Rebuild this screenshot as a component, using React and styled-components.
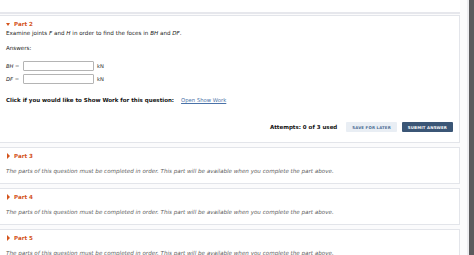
import React from "react";
import styled, { createGlobalStyle } from "styled-components";

const Global = createGlobalStyle`
  html, body { margin: 0; padding: 0; background: #ffffff; }
  body { font-family: "DejaVu Sans", Verdana, sans-serif; color: #333; }
`;

const Frame = styled.div`
  display: flex;
  width: 474px;
  height: 255px;
  overflow: hidden;
`;

const Main = styled.div`
  flex: 1;
  display: flex;
  flex-direction: column;
  gap: 4px;
  padding-right: 7px;
  background: #fbfbfc;
`;

const Edge = styled.div`
  width: 5px;
  border-left: 2px solid #ececef;
  background: #5b5b5d;
  flex-shrink: 0;
`;

const Card = styled.section`
  background: #fff;
  border: 1px solid #e3e5ea;
  border-left: none;
  box-sizing: border-box;
  padding: 4px 6px 0 6px;
  height: ${(p) => p.$h}px;
  flex-shrink: 0;
`;

const TopCard = styled.div`
  height: 12px;
  background: #fff;
  border-bottom: 2px solid #e6e7ec;
  flex-shrink: 0;
  margin-bottom: -3px;
`;

const PartTitle = styled.div`
  display: flex;
  align-items: center;
  gap: 4px;
  color: #d4541c;
  font-size: 5.6px;
  font-weight: bold;
  height: 8px;
`;

const Arrow = styled.span`
  width: 0;
  height: 0;
  ${(p) =>
    p.$open
      ? `border-left: 2.5px solid transparent; border-right: 2.5px solid transparent; border-top: 3px solid #d4541c;`
      : `border-top: 3px solid transparent; border-bottom: 3px solid transparent; border-left: 3px solid #d4541c; margin-left: 1px;`}
`;

const Text = styled.p`
  margin: ${(p) => p.$m || "0"};
  font-size: 5.6px;
  color: #222;
  line-height: 8px;
`;

const Locked = styled.p`
  margin: 7px 0 0 0;
  font-size: 5.6px;
  font-style: italic;
  color: #5e5e5e;
  line-height: 8px;
`;

const AnswerRow = styled.div`
  display: flex;
  align-items: center;
  height: 10px;
  margin-top: ${(p) => p.$mt}px;
  font-size: 5.2px;
`;

const Label = styled.span`
  width: 17px;
  font-style: italic;
  color: #222;
`;

const Input = styled.div`
  width: 69px;
  height: 8px;
  border: 1px solid #b4b4b4;
  border-radius: 1px;
  background: #fff;
`;

const Unit = styled.span`
  margin-left: 3px;
  color: #222;
`;

const WorkRow = styled.div`
  display: flex;
  align-items: center;
  gap: 7px;
  margin-top: 13px;
  font-size: 5.5px;
`;

const Bold = styled.span`
  font-weight: bold;
  color: #111;
`;

const Link = styled.span`
  color: #4a72a8;
  text-decoration: underline;
  font-size: 5.3px;
`;

const Actions = styled.div`
  display: flex;
  justify-content: flex-end;
  align-items: center;
  margin-top: 19px;
  font-size: 5.5px;
`;

const Attempts = styled.span`
  font-weight: bold;
  color: #111;
  margin-right: 9px;
`;

const Btn = styled.div`
  height: 10px;
  display: flex;
  align-items: center;
  padding: 0 ${(p) => (p.$primary ? 6 : 6)}px;
  font-size: 3.9px;
  font-weight: bold;
  letter-spacing: 0.15px;
  border-radius: 1px;
  background: ${(p) => (p.$primary ? "#3b5676" : "#e9eef4")};
  color: ${(p) => (p.$primary ? "#fff" : "#4b6c93")};
  margin-left: ${(p) => (p.$primary ? 5 : 0)}px;
`;

const lockedMsg =
  "The parts of this question must be completed in order. This part will be available when you complete the part above.";

function LockedPart({ n }) {
  return (
    <Card $h={37}>
      <PartTitle>
        <Arrow />
        Part {n}
      </PartTitle>
      <Locked>{lockedMsg}</Locked>
    </Card>
  );
}

export default function App() {
  return (
    <>
      <Global />
      <Frame>
        <Main>
          <TopCard />
          <Card $h={128}>
            <PartTitle>
              <Arrow $open />
              Part 2
            </PartTitle>
            <Text $m="1px 0 0 0">
              Examine joints <i>F</i> and <i>H</i> in order to find the foces in <i>BH</i> and <i>DF</i>.
            </Text>
            <Text $m="7px 0 0 0">Answers:</Text>
            <AnswerRow $mt={9}>
              <Label>BH =</Label>
              <Input />
              <Unit>kN</Unit>
            </AnswerRow>
            <AnswerRow $mt={3}>
              <Label>DF =</Label>
              <Input />
              <Unit>kN</Unit>
            </AnswerRow>
            <WorkRow>
              <Bold>Click if you would like to Show Work for this question:</Bold>
              <Link>Open Show Work</Link>
            </WorkRow>
            <Actions>
              <Attempts>Attempts: 0 of 3 used</Attempts>
              <Btn>SAVE FOR LATER</Btn>
              <Btn $primary>SUBMIT ANSWER</Btn>
            </Actions>
          </Card>
          <LockedPart n={3} />
          <LockedPart n={4} />
          <LockedPart n={5} />
        </Main>
        <Edge />
      </Frame>
    </>
  );
}
